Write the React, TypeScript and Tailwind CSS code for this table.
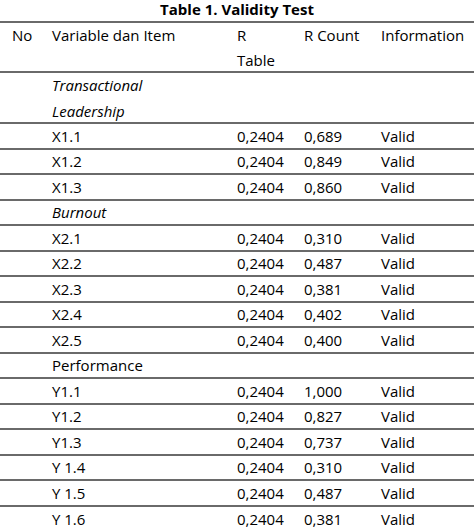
const rows: { item: string; r: string; count: string; info: string; italic?: boolean }[] = [
  { item: "X1.1", r: "0,2404", count: "0,689", info: "Valid" },
  { item: "X1.2", r: "0,2404", count: "0,849", info: "Valid" },
  { item: "X1.3", r: "0,2404", count: "0,860", info: "Valid" },
  { item: "Burnout", r: "", count: "", info: "", italic: true },
  { item: "X2.1", r: "0,2404", count: "0,310", info: "Valid" },
  { item: "X2.2", r: "0,2404", count: "0,487", info: "Valid" },
  { item: "X2.3", r: "0,2404", count: "0,381", info: "Valid" },
  { item: "X2.4", r: "0,2404", count: "0,402", info: "Valid" },
  { item: "X2.5", r: "0,2404", count: "0,400", info: "Valid" },
  { item: "Performance", r: "", count: "", info: "" },
  { item: "Y1.1", r: "0,2404", count: "1,000", info: "Valid" },
  { item: "Y1.2", r: "0,2404", count: "0,827", info: "Valid" },
  { item: "Y1.3", r: "0,2404", count: "0,737", info: "Valid" },
  { item: "Y 1.4", r: "0,2404", count: "0,310", info: "Valid" },
  { item: "Y 1.5", r: "0,2404", count: "0,487", info: "Valid" },
  { item: "Y 1.6", r: "0,2404", count: "0,381", info: "Valid" },
];

const grid = "grid grid-cols-[52px_185px_67px_77px_1fr]";
const line = "border-b-[2px] border-[#6a6a6a]";

export default function App() {
  return (
    <div className="w-[474px] h-[532px] overflow-hidden bg-white text-black text-[15px] font-['Open_Sans',sans-serif]">
      {/* Title */}
      <div className={`h-[23px] flex items-start justify-center font-bold leading-[19px] ${line}`}>
        Table 1. Validity Test
      </div>

      {/* Header */}
      <div className={`${grid} h-[50px] leading-[25px] ${line}`}>
        <div className="pl-[12px]">No</div>
        <div>Variable dan Item</div>
        <div>R<br />Table</div>
        <div>R Count</div>
        <div>Information</div>
      </div>

      <div className={`${grid} h-[51px] leading-[25.5px] ${line}`}>
        <div />
        <div className="italic">Transactional<br />Leadership</div>
      </div>

      {rows.map((row, i) => (
        <div
          key={row.item}
          className={`${grid} h-[25.5px] items-center ${i < rows.length - 1 ? line : ""}`}
        >
          <div />
          <div className={row.italic ? "italic" : ""}>{row.item}</div>
          <div>{row.r}</div>
          <div>{row.count}</div>
          <div>{row.info}</div>
        </div>
      ))}
    </div>
  );
}
